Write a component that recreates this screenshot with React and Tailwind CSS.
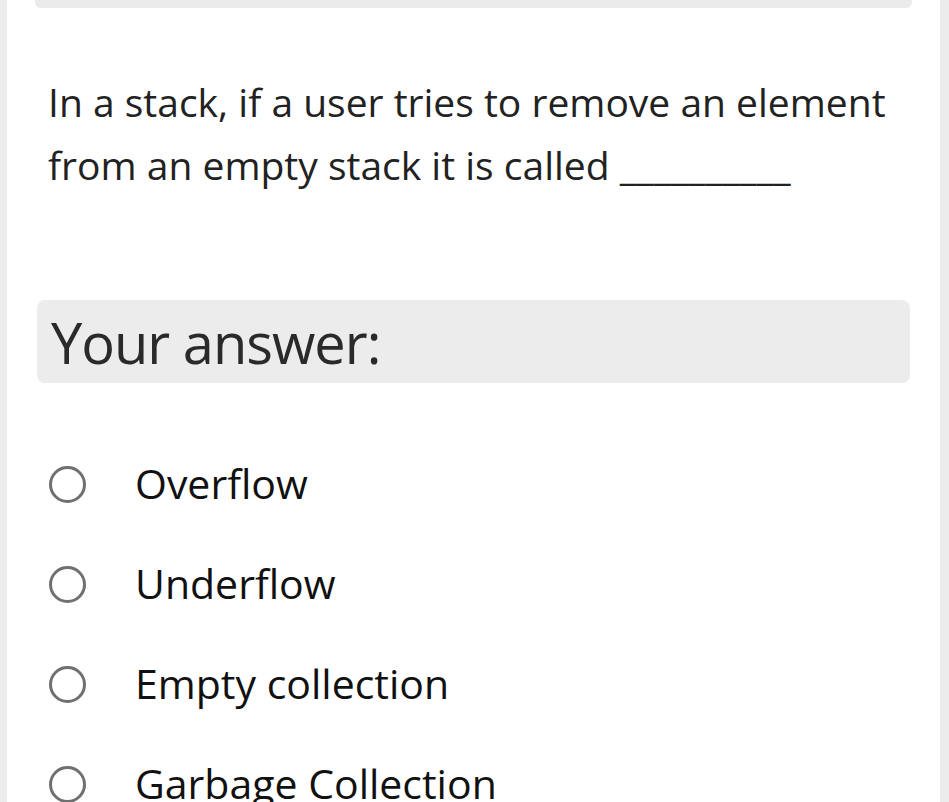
import React from 'react';

const options = ['Overflow', 'Underflow', 'Empty collection', 'Garbage Collection'];

const Radio = () => (
  <span className="w-[37px] h-[37px] rounded-full border-[3px] border-[#707070] shrink-0" />
);

export default function App() {
  return (
    <div className="h-[802px] w-[949px] overflow-hidden bg-[#ececec] flex" style={{ fontFamily: '"Open Sans", "Noto Sans", sans-serif' }}>
      <div className="ml-[7px] mr-[9px] flex-1 bg-white flex flex-col">
        <div className="mx-[28px] h-[8px] shrink-0 bg-[#ebebeb] rounded-b-[6px]" />
        <div className="shrink-0 px-[41px] pt-[62px] text-[39px] leading-[63px] text-[#222]">
          In a stack, if a user tries to remove an element from an empty stack it is called __________
        </div>
        <div className="shrink-0 mx-[30px] mt-[104px] h-[83px] bg-[#ececec] rounded-[8px] flex items-center px-[14px]">
          <span className="text-[56px] text-[#2a2a2a] tracking-[-1px]">Your answer:</span>
        </div>
        <div className="shrink-0 flex flex-col mt-[76px] gap-[50px] px-[42px]">
          {options.map((o) => (
            <div key={o} className="flex items-center gap-[49px] h-[50px]">
              <Radio />
              <span className="text-[41px] text-[#111]">{o}</span>
            </div>
          ))}
        </div>
      </div>
    </div>
  );
}
